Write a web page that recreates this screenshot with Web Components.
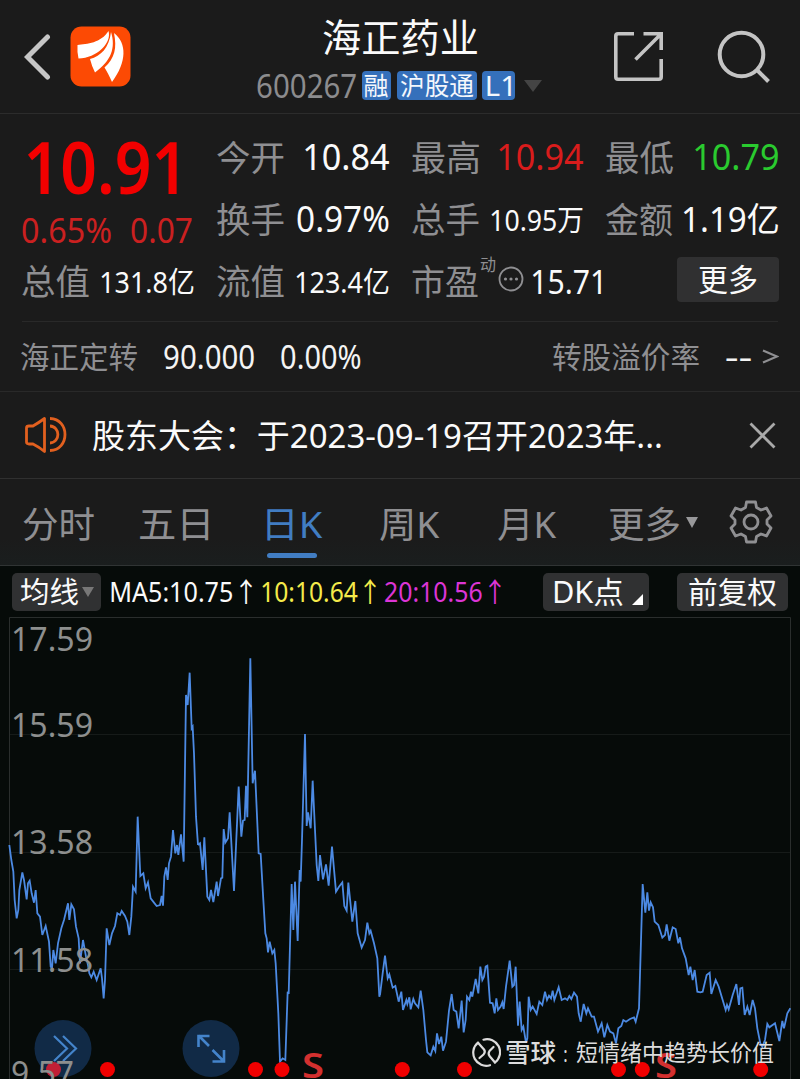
<!DOCTYPE html>
<html lang="zh-CN">
<head>
<meta charset="utf-8">
<title>海正药业 600267</title>
<style>
  body {
    background: #1b1b1b;
    color: #fafafa;
    font-family: 'Noto Sans', 'Noto Sans CJK SC', sans-serif;
    height: 1079px;
    margin: 0;
    overflow: hidden;
    width: 800px;
  }
</style>
</head>
<body>
<stock-header></stock-header>
<quote-panel></quote-panel>
<bond-row></bond-row>
<news-bar></news-bar>
<period-tabs></period-tabs>
<ma-toolbar></ma-toolbar>
<price-chart></price-chart>

<script>
const FONT = '"Noto Sans", "Noto Sans CJK SC", sans-serif';
const context = document.createElement( 'canvas' ).getContext( '2d' );

// Single line label
// Condensed or expanded to fill its width
class FitText extends HTMLElement {
  constructor() {
    super();

    const template = document.createElement( 'template' );
    template.innerHTML = /* template */ `
      <style>
        :host {
          display: block;
          flex: none;
        }

        span {
          display: inline-block;
          transform-origin: 0 0;
          white-space: nowrap;
        }
      </style>
      <span><slot></slot></span>
    `;

    // Root
    this.attachShadow( {mode: 'open'} );
    this.shadowRoot.appendChild( template.content.cloneNode( true ) );

    // Elements
    this.$label = this.shadowRoot.querySelector( 'span' );
  }

  connectedCallback() {
    const size = parseFloat( this.getAttribute( 'size' ) );
    const width = parseFloat( this.getAttribute( 'width' ) );

    context.font = `${getComputedStyle( this ).fontWeight} ${size}px ${FONT}`;
    const box = context.measureText( this.textContent );
    const scale = width / ( box.actualBoundingBoxLeft + box.actualBoundingBoxRight );

    this.style.width = `${width}px`;
    this.style.height = `${size}px`;
    this.style.fontSize = `${size}px`;
    this.style.lineHeight = `${size}px`;
    this.$label.style.transform =
      `translate( ${box.actualBoundingBoxLeft * scale}px, 0.005em ) scaleX( ${scale} )`;
  }
}

window.customElements.define( 'fit-text', FitText );

// Elements with fixed content
function define( name, markup ) {
  const template = document.createElement( 'template' );
  template.innerHTML = markup;

  window.customElements.define( name, class extends HTMLElement {
    constructor() {
      super();
      this.attachShadow( {mode: 'open'} );
      this.shadowRoot.appendChild( template.content.cloneNode( true ) );
    }
  } );
}

define( 'stock-header', /* template */ `
  <style>
    :host {
      align-items: center;
      border-bottom: solid 1px #2c2c2c;
      box-sizing: border-box;
      display: flex;
      height: 114px;
      padding: 0 0 0 24px;
    }

    svg { display: block; flex: none; }
    .logo { margin-left: 19px; }
    .name {
      align-items: center;
      display: flex;
      flex-direction: column;
      gap: 14px;
      margin: 5px 0 0 126px;
      width: 286px;
    }
    .code { align-items: center; color: #8c8c8e; display: flex; width: 100%; }
    .badge {
      align-items: center;
      background: #3570bb;
      border-radius: 4px;
      color: #f4f7fc;
      display: flex;
      height: 29px;
      justify-content: center;
      margin-left: 6px;
      width: 29px;
    }
    .wide { width: 80px; }
    .level { margin-left: 5px; width: 33px; }
    .arrow { margin-left: 9px; }
    .share { margin-left: 70px; }
    .search { margin-left: 53px; }
  </style>
  <svg width="27" height="46" viewBox="0 0 27 46" fill="none" stroke="#c6c6c6" stroke-width="5" stroke-linecap="round"><path d="M23.500 3 L3.500 23 L23.500 43"/></svg>
  <svg class="logo" width="61" height="61" viewBox="0 0 61 61">
    <rect x=".5" y=".5" width="60" height="60" rx="11" fill="#fc4a04"/>
    <g fill="#fff">
      <path d="M7.500 19 C17 18 31 17 38.500 5 C42 17 27 32 8.500 32.500 Q7 26 7.500 19Z"/>
      <path d="M20 33 C31 30 39 22 41 6 C46 22 41 35 25 46.500 Q22 41 20 33Z"/>
      <path d="M34.500 41.500 C45 32 47 22 44 7 C57 17 57 36 42 56 Q38 47 34.500 41.500Z"/>
    </g>
  </svg>
  <div class="name">
    <fit-text size="39" width="154">海正药业</fit-text>
    <div class="code">
      <fit-text size="32" width="99">600267</fit-text>
      <div class="badge"><fit-text size="25" width="24">融</fit-text></div>
      <div class="badge wide"><fit-text size="25" width="74">沪股通</fit-text></div>
      <div class="badge level"><fit-text size="27" width="24">L1</fit-text></div>
      <svg class="arrow" width="18" height="12" viewBox="0 0 18 12"><path d="M0 0H18L9 12Z" fill="#444"/></svg>
    </div>
  </div>
  <svg class="share" width="51" height="51" viewBox="0 0 51 51" fill="none" stroke="#c4c4c4" stroke-width="3.600"><path d="M21 2.800H5Q2.800 2.800 2.800 5V46Q2.800 48.200 5 48.200H46Q48.200 48.200 48.200 46V28M30.500 2.800H48.200V19M48 3L22.500 28.500"/></svg>
  <svg class="search" width="54" height="54" viewBox="0 0 54 54" fill="none" stroke="#c4c4c4" stroke-width="4"><circle cx="24.500" cy="24.500" r="21.800"/><path d="M39.500 39.500L51.500 51.500"/></svg>
` );

define( 'quote-item', /* template */ `
  <style>
    :host {
      align-items: center;
      display: flex;
      justify-content: space-between;
    }

    .label { color: #8f8f92; }
  </style>
  <div class="label"><slot name="label"></slot></div>
  <slot></slot>
` );

define( 'quote-panel', /* template */ `
  <style>
    :host {
      border-bottom: solid 1px #292929;
      box-sizing: border-box;
      column-gap: 23px;
      display: grid;
      grid-template-columns: repeat( 4, minmax( 0, 1fr ) );
      grid-template-rows: repeat( 3, 62px );
      height: 208px;
      margin: 0 22px;
      padding-top: 12px;
    }

    .price { display: grid; grid-row: span 2; grid-template-rows: 78px 46px; }
    .last { align-items: center; color: #f20000; display: flex; font-weight: 600; padding-left: 6px; }
    .change { align-items: center; color: #cb2020; display: flex; justify-content: space-between; padding: 4px 2px 0 0; }
    .up { color: #d91c1c; }
    .down { color: #2acb2f; }
    .pe { align-items: center; display: flex; }
    .pe, .mark { color: #8f8f92; }
    .mark { align-self: start; margin: 0 2px; padding-top: 6px; }
    .pe svg { flex: none; margin: -5px 8px 0 0; }
    .value { color: #fafafa; }
    .more {
      align-items: center;
      align-self: center;
      background: #303031;
      border-radius: 4px;
      display: flex;
      height: 45px;
      justify-content: center;
      justify-self: end;
      margin: 0 -1px 3px 0;
      width: 102px;
    }
  </style>
  <div class="price">
    <div class="last"><fit-text size="73" width="149">10.91</fit-text></div>
    <div class="change"><fit-text size="35" width="89">0.65%</fit-text><fit-text size="35" width="61">0.07</fit-text></div>
  </div>
  <quote-item><fit-text slot="label" size="35" width="67">今开</fit-text><fit-text size="36" width="84">10.84</fit-text></quote-item>
  <quote-item><fit-text slot="label" size="35" width="67">最高</fit-text><fit-text class="up" size="36" width="84">10.94</fit-text></quote-item>
  <quote-item><fit-text slot="label" size="35" width="67">最低</fit-text><fit-text class="down" size="36" width="83">10.79</fit-text></quote-item>
  <quote-item><fit-text slot="label" size="35" width="67">换手</fit-text><fit-text size="36" width="92">0.97%</fit-text></quote-item>
  <quote-item><fit-text slot="label" size="35" width="67">总手</fit-text><fit-text size="29" width="92">10.95万</fit-text></quote-item>
  <quote-item><fit-text slot="label" size="35" width="67">金额</fit-text><fit-text size="34" width="94">1.19亿</fit-text></quote-item>
  <quote-item><fit-text slot="label" size="35" width="67">总值</fit-text><fit-text size="29" width="93">131.8亿</fit-text></quote-item>
  <quote-item><fit-text slot="label" size="35" width="67">流值</fit-text><fit-text size="29" width="93">123.4亿</fit-text></quote-item>
  <div class="pe">
    <fit-text size="35" width="66">市盈</fit-text>
    <fit-text class="mark" size="17" width="16">动</fit-text>
    <svg width="26" height="26" viewBox="0 0 26 26" fill="#8f8f92"><circle cx="13" cy="13" r="11.500" fill="none" stroke="#8f8f92" stroke-width="1.800"/><circle cx="7.500" cy="13" r="1.600"/><circle cx="13" cy="13" r="1.600"/><circle cx="18.500" cy="13" r="1.600"/></svg>
    <fit-text class="value" size="33" width="69">15.71</fit-text>
  </div>
  <div class="more"><fit-text size="31" width="58">更多</fit-text></div>
` );

define( 'bond-row', /* template */ `
  <style>
    :host {
      align-items: center;
      border-bottom: solid 1px #292929;
      box-sizing: border-box;
      color: #8f8f92;
      display: flex;
      height: 70px;
      padding: 0 21px;
    }

    .value { color: #f4f4f4; margin-left: 27px; }
    .premium { margin-left: auto; }
    svg { margin-left: 10px; }
  </style>
  <fit-text size="30" width="116">海正定转</fit-text>
  <fit-text class="value" size="32" width="90">90.000</fit-text>
  <fit-text class="value" size="32" width="80">0.00%</fit-text>
  <fit-text class="premium" size="30" width="146">转股溢价率</fit-text>
  <fit-text class="value" size="32" width="26">--</fit-text>
  <svg width="17" height="15" viewBox="0 0 17 15" fill="none" stroke="#8f8f92" stroke-width="2.200"><path d="M1 1.500L15 7.500L1 13.500"/></svg>
` );

define( 'news-bar', /* template */ `
  <style>
    :host {
      align-items: center;
      border-bottom: solid 1px #303030;
      box-sizing: border-box;
      display: flex;
      height: 87px;
      padding: 0 24px;
    }

    fit-text { margin-left: 25px; }
    .close { margin-left: auto; }
  </style>
  <svg width="44" height="38" viewBox="0 0 44 38" fill="none" stroke="#e2601f" stroke-width="2.800" stroke-linejoin="round"><path d="M2.500 12Q2.500 10 5 10H9Q15 6.500 20.500 2.500V35.500Q15 31 9 28H5Q2.500 28 2.500 26ZM26 2.500C46 3 46 34 26 34.500M26 10C36.500 10.500 36.500 26.500 26 27"/></svg>
  <fit-text size="33" width="568">股东大会：于2023-09-19召开2023年...</fit-text>
  <svg class="close" width="27" height="27" viewBox="0 0 27 27" fill="none" stroke="#a9a9a9" stroke-width="2.800"><path d="M1.500 1.500L25.500 25.500M25.500 1.500L1.500 25.500"/></svg>
` );

define( 'period-tabs', /* template */ `
  <style>
    :host {
      background: linear-gradient( #1b1b1b 70%, #1a1e1e );
      border-bottom: solid 1px #303434;
      box-sizing: border-box;
      color: #8f8f92;
      display: flex;
      height: 87px;
      padding: 18px 0 0 23px;
    }

    .tab { align-items: center; display: grid; grid-template-rows: 56px 5px; }
    .active { color: #417dc2; margin: 0 57px 0 59px; }
    .active::after { background: #417dc2; border-radius: 3px; content: ''; height: 5px; width: 50px; }
    .five { margin-left: 46px; }
    .month { margin-left: 58px; }
    .more { margin-left: 52px; }
    .arrow { margin: 20px 0 0 7px; }
    .gear { margin: 3px 0 0 31px; }
  </style>
  <div class="tab"><fit-text size="36" width="71">分时</fit-text></div>
  <div class="tab five"><fit-text size="36" width="68">五日</fit-text></div>
  <div class="tab active"><fit-text size="36" width="56">日K</fit-text></div>
  <div class="tab"><fit-text size="36" width="60">周K</fit-text></div>
  <div class="tab month"><fit-text size="36" width="59">月K</fit-text></div>
  <div class="tab more"><fit-text size="36" width="70">更多</fit-text></div>
  <svg class="arrow" width="12" height="11" viewBox="0 0 12 11"><path d="M0 0H12L6 11Z" fill="#98989a"/></svg>
  <svg class="gear" width="44" height="44" viewBox="0 0 44 44" fill="none" stroke="#8f8f92" stroke-width="2.800" stroke-linejoin="round"><path d="M17.500 2H26.500L27.500 7.500L32 10L37.500 8L42 16L38 20V24L42 28L37.500 36L32 34L27.500 36.500L26.500 42H17.500L16.500 36.500L12 34L6.500 36L2 28L6 24V20L2 16L6.500 8L12 10L16.500 7.500Z"/><circle cx="22" cy="22" r="7"/></svg>
` );

define( 'ma-toolbar', /* template */ `
  <style>
    :host {
      align-items: center;
      background: #060b09;
      box-sizing: border-box;
      display: flex;
      height: 51px;
      padding: 0 12px;
    }

    .button {
      align-items: center;
      background: #303132;
      border-radius: 5px;
      box-sizing: border-box;
      display: flex;
      height: 38px;
    }
    .lines { gap: 4px; padding-left: 9px; width: 89px; }
    .five { margin-left: 10px; }
    .ten { color: #f4ea4a; margin-left: 10px; }
    .twenty { color: #dc35d6; margin-left: 9px; }
    .dk { gap: 9px; margin-left: 42px; padding-left: 11px; width: 106px; }
    .dk svg { margin-top: 15px; }
    .rights { justify-content: center; margin-left: auto; width: 111px; }
  </style>
  <div class="button lines">
    <fit-text size="29" width="57">均线</fit-text>
    <svg width="12" height="10" viewBox="0 0 12 10"><path d="M0 0H12L6 10Z" fill="#777"/></svg>
  </div>
  <fit-text class="five" size="27" width="141">MA5:10.75↑</fit-text>
  <fit-text class="ten" size="27" width="114">10:10.64↑</fit-text>
  <fit-text class="twenty" size="27" width="116">20:10.56↑</fit-text>
  <div class="button dk">
    <fit-text size="30" width="69">DK点</fit-text>
    <svg width="11" height="11" viewBox="0 0 11 11"><path d="M11 0V11H0Z" fill="#fff"/></svg>
  </div>
  <div class="button rights"><fit-text size="30" width="88">前复权</fit-text></div>
` );

define( 'price-chart', /* template */ `
  <style>
    :host {
      background: #060b09;
      display: block;
      height: 462px;
      position: relative;
    }

    svg { display: block; font-family: 'Noto Sans', sans-serif; }
    polyline { fill: none; stroke: #4c8ae3; stroke-width: 1.8px; vector-effect: non-scaling-stroke; }
    .axis { fill: #8d8f8e; font-size: 33px; }
    .sell { fill: #d3302f; font-size: 34px; font-weight: 600; }

    /* Signature over the chart */
    .mark {
      align-items: center;
      color: #dcdcdc;
      display: flex;
      left: 472px;
      position: absolute;
      top: 421px;
    }
    .site { font-weight: 500; margin-left: 5px; }
    .colon { margin: 0 9px 0 8px; }
  </style>
  <svg width="800" height="462" viewBox="0 617 800 462">
    <g fill="none">
      <path d="M9.500 1079V617.500H790.500V1079" stroke="#2a2e2d"/>
      <path d="M10 734.500H790M10 852.500H790M10 969.500H790" stroke="#161b19"/>
    </g>
    <g transform="translate(0 620) scale(.33333)"><polyline points="28,675 34,720 40,755 44,840 50,895 55,870 58,810 67,757 72,780 80,838 84,790 89,782 95,820 102,848 107,810 112,880 120,890 127,945 137,918 147,965 152,1040 156,1045 160,990 167,1030 174,970 184,925 192,900 204,850 208,900 214,853 222,868 228,920 236,955 240,1030 249,960 258,1010 264,1035 268,1060 274,1072 281,1055 290,1080 302,1045 306,1075 311,1135 315,1080 320,925 328,975 336,940 345,918 352,880 360,885 365,873 375,888 382,905 388,945 394,890 399,800 407,815 413,590 421,768 430,760 437,805 444,787 452,835 462,848 470,858 480,855 485,828 489,857 493,770 498,742 503,780 507,730 513,710 519,630 526,700 531,675 535,705 543,643 551,725 558,225 563,255 569,158 575,325 578,320 582,400 588,590 594,675"/></g>
    <g transform="translate(180 620) scale(.33333)"><polyline points="54,675 60,670 68,750 73,652 82,830 88,840 93,810 100,846 110,785 114,828 123,775 127,773 131,627 136,668 144,655 149,577 162,813 176,500 184,650 189,602 194,600 198,497 202,592 211,115 218,490 225,452 236,700 242,702 250,840 256,940 260,955 264,997 269,965 277,1000 283,990 287,1030 295,1180 300,1325 308,1315 316,1320 323,1115 326,1122 335,792 340,930 345,785 353,963 359,750 362,785 366,660 375,342 380,618 384,577 392,625 398,482 410,735 415,783 420,705 429,778 438,733 446,797 456,680 468,815 477,800 487,787 493,858 500,872 505,788 517,905 526,843 533,940 545,983 555,960 562,908 568,940 572,932 582,970 592,1015 598,1130 600,1125"/></g>
    <g transform="translate(380 820) scale(.33333)"><polyline points="0,525 8,460 15,407 23,475 28,463 38,503 46,498 56,545 64,515 69,570 79,540 82,552 88,532 92,568 100,537 105,550 115,562 122,512 130,570 138,660 142,697 152,706 160,680 166,693 171,640 177,672 184,650 189,692 198,665 207,572 215,522 221,570 229,575 236,625 245,542 251,637 257,600 261,530 268,540 273,515 277,530 287,477 295,520 301,440 307,480 312,470 317,440 322,437 330,548 338,550 344,580 349,535 354,570 362,560 367,547 371,567 378,500 389,422 397,500 402,495 407,440 414,617 419,545 425,630 430,620 438,668 442,655 446,530 452,570 458,560 470,582 478,545 487,555 495,515 501,540 507,527 513,535 518,512 523,540 536,502 545,540 555,535 562,540 568,528 574,537 582,518 591,530 596,580 602,605"/></g>
    <g transform="translate(580 820) scale(.33333)"><polyline points="2,605 11,552 19,580 24,565 35,590 42,590 54,635 65,610 73,652 82,615 90,635 100,640 108,670 115,625 124,618 130,600 138,605 150,597 162,592 167,605 177,565 188,192 196,278 202,217 207,272 212,247 219,262 224,305 235,315 247,353 255,345 260,313 268,362 278,322 287,327 295,370 300,352 306,385 317,415 326,465 331,440 338,480 344,450 352,515 361,517 368,515 380,465 389,458 394,522 407,480 416,500 428,540 437,570 441,555 446,568 458,525 469,492 477,555 481,505 487,503 494,585 502,560 509,585 518,540 525,565 532,625 541,670 547,680 555,660 562,612 568,622 585,610 598,663 607,603 612,625 622,580 631,565"/></g>
    <g fill="#112a46"><circle cx="63" cy="1048.500" r="28.500"/><circle cx="211" cy="1048.500" r="28.500"/></g>
    <path d="M54 1036L67 1048.500L54 1061M63 1036L76 1048.500L63 1061" fill="none" stroke="#4484cb" stroke-width="2.200"/>
    <path d="M209 1046L198.500 1035.500M198.500 1047V1036H209.500M212.500 1050L224 1061.500M224 1050V1061.500H212.500" fill="none" stroke="#4484cb" stroke-width="2.600"/>
    <g class="axis">
      <text x="11" y="651" textLength="82" lengthAdjust="spacingAndGlyphs">17.59</text>
      <text x="11" y="736.500" textLength="82" lengthAdjust="spacingAndGlyphs">15.59</text>
      <text x="11" y="854" textLength="82" lengthAdjust="spacingAndGlyphs">13.58</text>
      <text x="11" y="971.500" textLength="82" lengthAdjust="spacingAndGlyphs">11.58</text>
    </g>
    <circle cx="53.500" cy="1069.500" r="7.500" fill="#c11f35"/>
    <text class="axis" x="11" y="1085" textLength="63" lengthAdjust="spacingAndGlyphs">9.57</text>
    <g fill="#f00000">
      <circle cx="107.500" cy="1069.500" r="7.500"/>
      <circle cx="255.500" cy="1069.500" r="7.500"/>
      <circle cx="282" cy="1069.500" r="7.500"/>
      <circle cx="402.300" cy="1069.500" r="7.500"/>
      <circle cx="464.500" cy="1069.500" r="7.500"/>
      <circle cx="618.500" cy="1069.500" r="7.500"/>
      <circle cx="642.300" cy="1069.500" r="7.500"/>
      <circle cx="760.700" cy="1069.500" r="7.500"/>
    </g>
    <text class="sell" x="302" y="1077.500" textLength="22" lengthAdjust="spacingAndGlyphs">S</text>
    <text class="sell" x="655" y="1077.500" textLength="22" lengthAdjust="spacingAndGlyphs">S</text>
  </svg>
  <div class="mark">
    <svg width="29" height="29" viewBox="0 0 29 29" fill="none" stroke="#dcdcdc" stroke-width="2.200" stroke-linecap="round"><path d="M11.500 1.700A13 13 0 0 1 23 24.500M18 27.200A13 13 0 0 1 6 4.700"/><path d="M6 4.700L12 11.500Q13.800 14 11.500 16.500L7.500 20M23 24.500L17.500 18Q15.800 15.500 17.500 13L21.500 9"/></svg>
    <fit-text class="site" size="25" width="50">雪球</fit-text>
    <fit-text class="colon" size="22" width="3">:</fit-text>
    <fit-text size="23" width="198">短情绪中趋势长价值</fit-text>
  </div>
` );
</script>
</body>
</html>
